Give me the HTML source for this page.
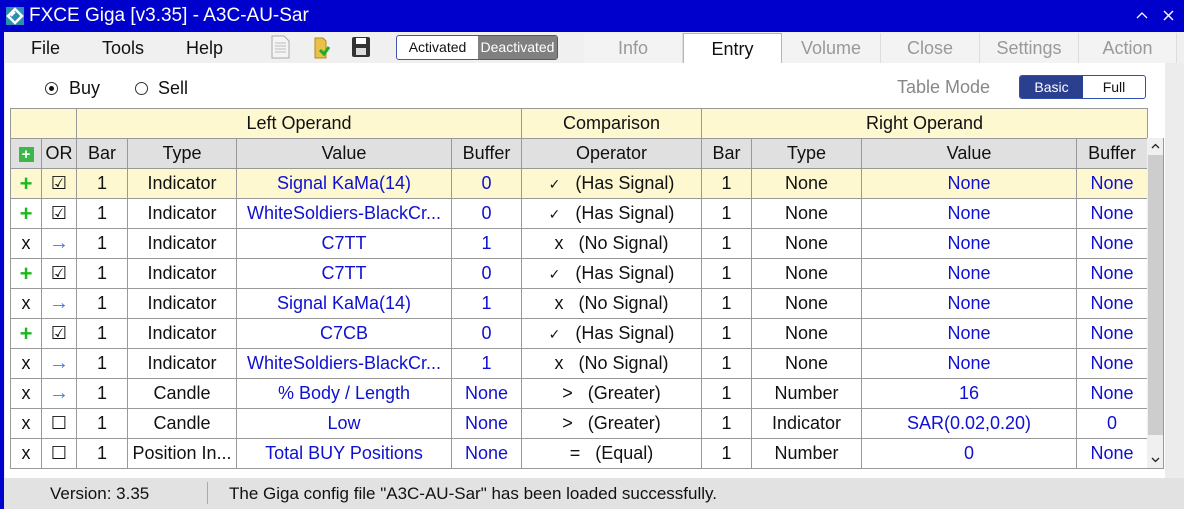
<!DOCTYPE html>
<html><head><meta charset="utf-8"><style>
*{margin:0;padding:0;box-sizing:border-box}
body{width:1184px;height:509px;overflow:hidden;background:#ececec;font-family:"Liberation Sans","DejaVu Sans",sans-serif;position:relative}
.title{position:absolute;left:0;top:0;width:1184px;height:32px;background:#0000cc;color:#fff;font-size:19px}
.title .t{position:absolute;left:29px;top:5px}
.title .ic{position:absolute;left:5px;top:6px;width:20px;height:20px}
.lb{position:absolute;left:0;top:32px;width:4px;height:477px;background:#0000cc}
.menu{position:absolute;left:4px;top:32px;width:1180px;height:31px;background:#f0f0f0;font-size:18px;color:#111}
.menu span{position:absolute;top:6px}
.tog{position:absolute;left:396px;top:35px;width:162px;height:25px;border:1px solid #4455aa;border-radius:3px;background:#fff;font-size:14px}
.tog .a{position:absolute;left:0;top:0;width:81px;height:23px;line-height:23px;text-align:center;color:#111}
.tog .d{position:absolute;left:81px;top:0;width:79px;height:23px;line-height:23px;text-align:center;color:#fff;background:#808080}
.tab{position:absolute;top:33px;height:30px;width:99px;background:#f3f3f3;border-right:1px solid #ddd;color:#999;font-size:18px;text-align:center;line-height:30px}
.tab.on{background:#fff;color:#111;border:1px solid #8cc4e0;border-bottom:none;height:31px}
.content{position:absolute;left:5px;top:63px;width:1160px;height:415px;background:#fff}
.status{position:absolute;left:4px;top:478px;width:1180px;height:31px;background:#e2e2e2;font-size:17px;color:#111}
table{position:absolute;left:10px;top:108px;border-collapse:collapse;table-layout:fixed;width:1137px;font-size:18px}
td{border:1px solid #999;height:30px;text-align:center;white-space:nowrap;overflow:hidden;color:#111;padding:0}
tr.h1 td{background:#fdf8cf}
tr.h2 td{background:#e0e0e0}
tr.sel td{background:#fdf8cf}
.b{color:#1010d0}
.g{color:#1cb81c;font-size:22px;font-weight:bold}
.ar{color:#4477ee;font-size:20px}
.ck{font-size:14px}
.rd{position:absolute;top:82px;width:13px;height:13px;border:1px solid #333;border-radius:50%}
.sb{position:absolute;left:1147px;top:138px;width:17px;height:331px;background:#f0f0f0;border-right:1px solid #999;border-bottom:1px solid #999}
.sb .th{position:absolute;left:1px;top:17px;width:15px;height:280px;background:#cdcdcd}
</style></head><body>
<div class="title"><svg class="ic" viewBox="0 0 20 20"><rect x="1" y="1" width="18" height="18" fill="#2a8fb0"/><path d="M10 3 L17 10 L10 17 L3 10 Z" fill="none" stroke="#fff" stroke-width="2.5"/><path d="M6 10 L10 6" stroke="#fff" stroke-width="2"/></svg><span class="t">FXCE Giga [v3.35] - A3C-AU-Sar</span>
<svg style="position:absolute;left:1136px;top:11px" width="12" height="8"><path d="M1 7L6 2L11 7" stroke="#fff" stroke-width="1.3" fill="none"/></svg>
<svg style="position:absolute;left:1163px;top:10px" width="11" height="11"><path d="M1 1L10 10M10 1L1 10" stroke="#fff" stroke-width="1.4"/></svg></div>
<div class="lb"></div>
<div class="menu"><span style="left:27px">File</span><span style="left:98px">Tools</span><span style="left:182px">Help</span>
<svg style="position:absolute;left:266px;top:3px" width="20" height="24"><path d="M2 1h12l5 5v17H2z" fill="#f4f4f4" stroke="#aaa"/><path d="M5 8h11M5 11h11M5 14h11M5 17h11" stroke="#bbb"/></svg>
<svg style="position:absolute;left:308px;top:3px" width="20" height="24"><path d="M3 3h8l3 3v17H3z" fill="#e8c04a" stroke="#b08a20"/><path d="M8 15l4 4 5-7" stroke="#2a2" stroke-width="3" fill="none"/></svg>
<svg style="position:absolute;left:347px;top:4px" width="20" height="22"><rect x="1" y="1" width="18" height="20" rx="2" fill="#333"/><rect x="5" y="2" width="10" height="6" fill="#fff"/><rect x="5" y="12" width="10" height="7" fill="#ddd"/></svg>
</div>
<div class="tog"><div class="a">Activated</div><div class="d">Deactivated</div></div>
<div class="tab" style="left:584px">Info</div>
<div class="tab on" style="left:683px">Entry</div>
<div class="tab" style="left:782px">Volume</div>
<div class="tab" style="left:881px">Close</div>
<div class="tab" style="left:980px">Settings</div>
<div class="tab" style="left:1079px;width:98px">Action</div>
<div class="content"></div>
<div class="rd" style="left:45px"><div style="position:absolute;left:3px;top:3px;width:5px;height:5px;border-radius:50%;background:#111"></div></div>
<div style="position:absolute;left:69px;top:78px;font-size:18px;color:#111">Buy</div>
<div class="rd" style="left:135px"></div>
<div style="position:absolute;left:158px;top:78px;font-size:18px;color:#111">Sell</div>
<div style="position:absolute;left:897px;top:77px;font-size:18px;color:#888">Table Mode</div>
<div style="position:absolute;left:1019px;top:75px;width:127px;height:24px;border:1px solid #3050b0;border-radius:3px;font-size:14px;overflow:hidden"><div style="position:absolute;left:0;top:0;width:63px;height:22px;background:#2b3f8f;color:#fff;text-align:center;line-height:22px">Basic</div><div style="position:absolute;left:63px;top:0;width:62px;height:22px;text-align:center;line-height:22px;color:#111">Full</div></div>
<table>
<colgroup><col style="width:31px"><col style="width:35px"><col style="width:51px"><col style="width:109px"><col style="width:215px"><col style="width:70px"><col style="width:180px"><col style="width:50px"><col style="width:110px"><col style="width:215px"><col style="width:71px"></colgroup>
<tr class="h1"><td colspan="2"></td><td colspan="4">Left Operand</td><td>Comparison</td><td colspan="4">Right Operand</td></tr>
<tr class="h2"><td><span style="display:inline-block;width:15px;height:15px;background:#3cb84a;color:#fff;font-weight:bold;line-height:15px;font-size:15px">+</span></td><td>OR</td><td>Bar</td><td>Type</td><td>Value</td><td>Buffer</td><td>Operator</td><td>Bar</td><td>Type</td><td>Value</td><td>Buffer</td></tr>
<tr class="sel"><td class="g">+</td><td>☑</td><td>1</td><td>Indicator</td><td class="b">Signal KaMa(14)</td><td class="b">0</td><td><span class="ck">✓</span>&nbsp;&nbsp; (Has Signal)</td><td>1</td><td>None</td><td class="b">None</td><td class="b">None</td></tr>
<tr><td class="g">+</td><td>☑</td><td>1</td><td>Indicator</td><td class="b">WhiteSoldiers-BlackCr...</td><td class="b">0</td><td><span class="ck">✓</span>&nbsp;&nbsp; (Has Signal)</td><td>1</td><td>None</td><td class="b">None</td><td class="b">None</td></tr>
<tr><td>x</td><td class="ar">→</td><td>1</td><td>Indicator</td><td class="b">C7TT</td><td class="b">1</td><td>x&nbsp;&nbsp; (No Signal)</td><td>1</td><td>None</td><td class="b">None</td><td class="b">None</td></tr>
<tr><td class="g">+</td><td>☑</td><td>1</td><td>Indicator</td><td class="b">C7TT</td><td class="b">0</td><td><span class="ck">✓</span>&nbsp;&nbsp; (Has Signal)</td><td>1</td><td>None</td><td class="b">None</td><td class="b">None</td></tr>
<tr><td>x</td><td class="ar">→</td><td>1</td><td>Indicator</td><td class="b">Signal KaMa(14)</td><td class="b">1</td><td>x&nbsp;&nbsp; (No Signal)</td><td>1</td><td>None</td><td class="b">None</td><td class="b">None</td></tr>
<tr><td class="g">+</td><td>☑</td><td>1</td><td>Indicator</td><td class="b">C7CB</td><td class="b">0</td><td><span class="ck">✓</span>&nbsp;&nbsp; (Has Signal)</td><td>1</td><td>None</td><td class="b">None</td><td class="b">None</td></tr>
<tr><td>x</td><td class="ar">→</td><td>1</td><td>Indicator</td><td class="b">WhiteSoldiers-BlackCr...</td><td class="b">1</td><td>x&nbsp;&nbsp; (No Signal)</td><td>1</td><td>None</td><td class="b">None</td><td class="b">None</td></tr>
<tr><td>x</td><td class="ar">→</td><td>1</td><td>Candle</td><td class="b">% Body / Length</td><td class="b">None</td><td>&gt;&nbsp;&nbsp; (Greater)</td><td>1</td><td>Number</td><td class="b">16</td><td class="b">None</td></tr>
<tr><td>x</td><td>☐</td><td>1</td><td>Candle</td><td class="b">Low</td><td class="b">None</td><td>&gt;&nbsp;&nbsp; (Greater)</td><td>1</td><td>Indicator</td><td class="b">SAR(0.02,0.20)</td><td class="b">0</td></tr>
<tr><td>x</td><td>☐</td><td>1</td><td>Position In...</td><td class="b">Total BUY Positions</td><td class="b">None</td><td>=&nbsp;&nbsp; (Equal)</td><td>1</td><td>Number</td><td class="b">0</td><td class="b">None</td></tr>
</table>
<div class="sb"><div class="th"></div>
<svg style="position:absolute;left:4px;top:5px" width="9" height="6"><path d="M1 5L4.5 1.5L8 5" stroke="#222" stroke-width="1.3" fill="none"/></svg>
<svg style="position:absolute;left:4px;bottom:5px" width="9" height="6"><path d="M1 1L4.5 4.5L8 1" stroke="#222" stroke-width="1.3" fill="none"/></svg></div>
<div class="status"><span style="position:absolute;left:46px;top:6px">Version: 3.35</span><div style="position:absolute;left:203px;top:4px;width:1px;height:22px;background:#aaa"></div><span style="position:absolute;left:225px;top:6px">The Giga config file "A3C-AU-Sar" has been loaded successfully.</span></div>
</body></html>
